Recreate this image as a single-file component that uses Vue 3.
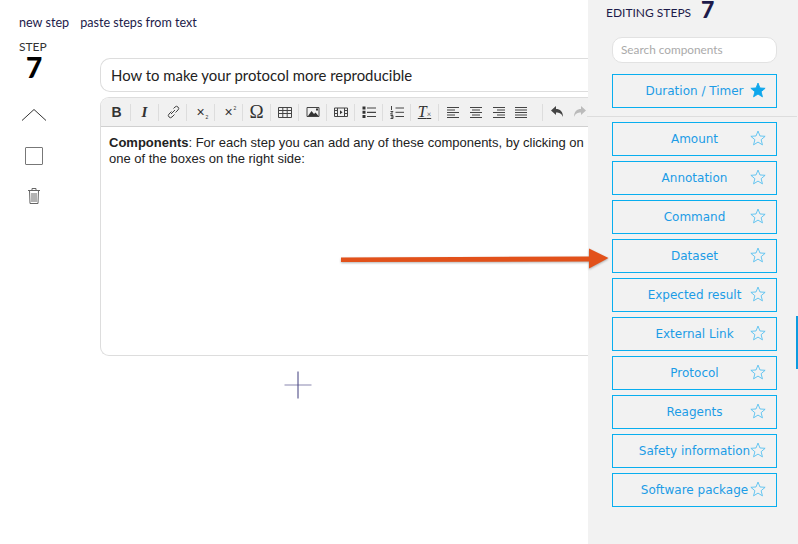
<script setup>
const components = ['Amount', 'Annotation', 'Command', 'Dataset', 'Expected result', 'External Link', 'Protocol', 'Reagents', 'Safety information', 'Software package']
const star = 'M9 1.2 11.2 6.7 17 7.1 12.5 10.9 14 16.7 9 13.6 4 16.7 5.5 10.9 1 7.1 6.8 6.7Z'
const tools = [
  { t: 'B', c: 'bold' },
  { t: 'I', c: 'ital' },
  { d: ['M7.5 8.5 5 11a2 2 0 0 0 3 3l2.5-2.5', 'M9.5 5.5 11 4a2 2 0 0 1 3 3l-2.5 2.5', 'M7 11l4-4'], s: 1 },
  { x: 'sub' },
  { x: 'sup' },
  { t: 'Ω', c: 'omega' },
  { d: ['M2.5 4.5h13v10h-13z', 'M2.5 7.5h13M2.5 10.5h13M6.8 4.5v10M11.2 4.5v10'], s: 1 },
  { d: ['M3 4.5h12v9H3z'], s: 1, f: ['M4 13l3.5-5 2.5 3 1.5-1.5 3 3.5z', 'M12 5.5h2v2h-2z'] },
  { d: ['M2.5 5h13v8.5h-13z', 'M5.5 5v8.5M12.5 5v8.5M2.5 7.5h3M2.5 10.5h3M12.5 7.5h3M12.5 10.5h3'], s: 1, f: ['M8 7.2l2.5 2-2.5 2z'] },
  { d: ['M7 5h9M7 9.3h9M7 13.5h9'], s: 1.2, f: ['M2.5 3.5h3v3h-3zM2.5 7.8h3v3h-3zM2.5 12h3v3h-3z'] },
  { d: ['M7.5 5h8.5M7.5 9.3h8.5M7.5 13.5h8.5', 'M3.5 3v4M2.5 8.5h2.5l-2.5 2.5h2.5M2.5 12.5h2.5v3h-2.5M3 14h2'], s: 1 },
  { t: 'T', c: 'clear', u: 1 },
  { d: ['M3 4.5h12M3 7h8M3 9.5h12M3 12h8M3 14.5h12'], s: 1.2 },
  { d: ['M3 4.5h12M5 7h8M3 9.5h12M5 12h8M3 14.5h12'], s: 1.2 },
  { d: ['M3 4.5h12M7 7h8M3 9.5h12M7 12h8M3 14.5h12'], s: 1.2 },
  { d: ['M3 4.5h12M3 7h12M3 9.5h12M3 12h12M3 14.5h12'], s: 1.2 }
]
</script>

<template>
  <div class="page">
    <main class="main">
      <nav class="links">
        <a>new step</a>
        <a>paste steps from text</a>
      </nav>
      <div class="step-row">
        <div class="step-col">
          <div class="step-label">STEP</div>
          <div class="step-num">7</div>
          <svg class="chev" width="26" height="14" viewBox="0 0 26 14"><path d="M1 12.5 13 1.5 25 12.5" fill="none" stroke="#333" stroke-width="1" /></svg>
          <span class="check"></span>
          <svg class="trash" width="14" height="18" viewBox="0 0 14 18" fill="none" stroke="#666" stroke-width="1">
            <path d="M1 3.5h12M5 3.5V1.5h4v2M2.5 3.5l.5 13h8l.5-13M5 6v9M7 6v9M9 6v9" />
          </svg>
        </div>
        <div class="edit-col">
          <div class="title">How to make your protocol more reproducible</div>
          <div class="editor">
            <div class="toolbar">
              <span v-for="(tool, i) in tools" :key="i" class="tool" :class="{ last: i === 15 }">
                <span v-if="tool.t" :class="tool.c">{{ tool.t }}<small v-if="tool.u">×</small></span>
                <span v-else-if="tool.x" class="script">×<small :class="tool.x">2</small></span>
                <svg v-else width="18" height="18" viewBox="0 0 18 18" fill="none" stroke="#444" :stroke-width="tool.s">
                  <path v-for="d in tool.d" :key="d" :d="d" />
                  <path v-for="d in tool.f" :key="d" :d="d" fill="#333" stroke="none" />
                </svg>
              </span>
              <span class="hist">
                <svg width="14" height="14" viewBox="0 0 14 14"><path d="M1 5.5 6 1v3c4 0 7 2.500 7 8-1.500-3.500-3.500-4.500-7-4.500V10z" fill="#444" /></svg>
                <svg width="14" height="14" viewBox="0 0 14 14"><path d="M13 5.500 8 1v3c-4 0-7 2.500-7 8 1.500-3.500 3.500-4.500 7-4.500V10z" fill="#bbb" /></svg>
              </span>
            </div>
            <div class="body">
              <b>Components</b>: For each step you can add any of these components, by clicking on<br>one of the boxes on the right side:
            </div>
          </div>
          <svg class="plus" width="28" height="28" viewBox="0 0 28 28">
            <path d="M0.500 14h27" stroke="#a5a3c2" stroke-width="1.300" />
            <path d="M14 0.500v27" stroke="#3f3c7c" stroke-width="1" />
          </svg>
        </div>
      </div>
    </main>

    <aside class="side">
      <div class="side-head">
        <span>EDITING STEPS</span>
        <span class="side-num">7</span>
      </div>
      <div class="search">Search components</div>
      <button class="comp">
        Duration / Timer
        <svg class="star" width="16" height="16" viewBox="0 0 18 18"><path :d="star" fill="#0fa7ec" stroke="#0fa7ec" /></svg>
      </button>
      <hr class="rule">
      <div class="list">
        <button v-for="name in components" :key="name" class="comp">
          {{ name }}
          <svg class="star" width="16" height="16" viewBox="0 0 18 18"><path :d="star" fill="none" stroke="#55c0f0" /></svg>
        </button>
      </div>
      <span class="scroll"></span>
    </aside>

    <svg class="arrow" width="270" height="24" viewBox="0 0 270 24">
      <path d="M0 9.500 248 8.500V0.500L267.500 10 248 20.500V13.500L0 14Z" fill="#e2511a" />
    </svg>
  </div>
</template>

<style>
html, body { margin: 0; background: #fff; }
</style>

<style scoped>
.page {
  position: relative;
  display: flex;
  width: 798px;
  height: 544px;
  overflow: hidden;
  font-family: Lato, "Open Sans", sans-serif;
  color: #222;
}
.main { width: 588px; flex: none; overflow: hidden; }
.links {
  display: flex;
  gap: 11px;
  padding: 14px 0 0 19px;
  height: 17px;
  font-size: 12.600px;
  line-height: 17px;
  color: #1d1b4a;
}
.step-row { display: flex; margin-top: 9px; }
.step-col {
  width: 100px;
  flex: none;
  display: flex;
  flex-direction: column;
  align-items: flex-start;
}
.step-label { margin-left: 19px; font-size: 12px; line-height: 14px; color: #333; }
.step-num { margin-left: 26px; font-size: 28px; line-height: 26px; font-weight: 900; color: #000; }
.chev { margin: 28px 0 0 21px; }
.check { margin: 25px 0 0 25px; width: 16px; height: 16px; border: 1px solid #777; border-radius: 1px; }
.trash { margin: 22px 0 0 27px; }
.edit-col { flex: 1; min-width: 0; margin-top: 18px; display: flex; flex-direction: column; }
.title {
  height: 32px;
  border: 1px solid #ddd;
  border-right: 0;
  border-radius: 10px 0 0 10px;
  padding-left: 10px;
  font-size: 14.900px;
  line-height: 32px;
  color: #222;
}
.editor {
  margin-top: 5px;
  height: 257px;
  border: 1px solid #ddd;
  border-right: 0;
  border-radius: 9px 0 0 9px;
  overflow: hidden;
}
.toolbar {
  display: flex;
  height: 28px;
  align-items: center;
  background: #f1f1f1;
  border-bottom: 1px solid #d0d0d0;
  padding-left: 2px;
}
.tool {
  flex: none;
  box-sizing: border-box;
  width: 28px;
  height: 17px;
  display: flex;
  align-items: center;
  justify-content: center;
  border-right: 1px solid #ddd;
  color: #333;
  font-family: "Liberation Sans", sans-serif;
}
.tool:nth-child(n+13) { width: 23px; border-right: 0; }
.tool:nth-child(13) { margin-left: 2px; }
.tool.last { width: 33px; padding-right: 10px; border-right: 1px solid #ddd; }
.bold { font-weight: 700; font-size: 14px; }
.ital { font: italic 700 15px "Liberation Serif", serif; }
.omega { font: 19px "Liberation Serif", serif; }
.clear { font: italic 16px "Liberation Serif", serif; text-decoration: underline; }
.clear small { font-size: 8px; font-style: normal; }
.script { font-size: 14px; position: relative; }
.script small { font-size: 5px; position: absolute; left: 9px; }
.script .sub { top: 10px; }
.script .sup { top: 1px; }
.hist { display: flex; gap: 9px; margin-left: 7px; }
.body {
  padding: 8px 8px;
  font: 13px/16px "Liberation Sans", sans-serif;
  color: #222;
  white-space: nowrap;
}
.plus { align-self: flex-start; margin: 15px 0 0 184px; }

.side {
  position: relative;
  flex: 1;
  background: #f2f2f2;
  display: flex;
  flex-direction: column;
}
.side-head {
  display: flex;
  align-items: flex-start;
  gap: 10px;
  height: 20px;
  padding-left: 18px;
  font-size: 12px;
  line-height: 26px;
  color: #1d1b4a;
}
.side-num { font-size: 23px; line-height: 19px; font-weight: 900; }
.search {
  box-sizing: border-box;
  margin: 17px 0 0 24px;
  width: 165px;
  height: 26px;
  background: #fff;
  border: 1px solid #e2e2e2;
  border-radius: 10px;
  padding-left: 8px;
  font-size: 11.800px;
  line-height: 24px;
  color: #aaa;
}
.comp {
  position: relative;
  box-sizing: border-box;
  display: block;
  margin: 0 0 0 24px;
  width: 165px;
  height: 34px;
  padding: 0;
  border: 1px solid #08aeef;
  border-radius: 0;
  background: transparent;
  color: #1c9ce6;
  font-family: "DejaVu Sans", sans-serif;
  font-size: 12px;
  text-align: center;
  white-space: nowrap;
}
.search + .comp { margin-top: 11px; }
.rule {
  width: 100%;
  margin: 8px 0 5px -1px;
  border: 0;
  border-top: 1px solid #ddd;
  box-sizing: content-box;
}
.list { display: flex; flex-direction: column; gap: 5px; }
.star { position: absolute; right: 10px; top: 7px; }
.scroll { position: absolute; right: 0; top: 316px; width: 2px; height: 53px; background: #0c9be0; }
.arrow {
  position: absolute;
  left: 341px;
  top: 248px;
  filter: drop-shadow(0 1px 1px rgba(0, 0, 0, .3));
}
</style>
